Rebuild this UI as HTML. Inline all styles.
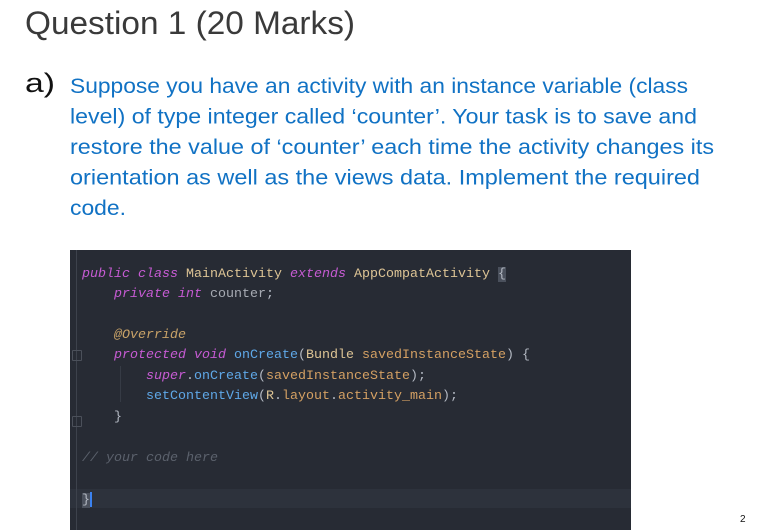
<!DOCTYPE html>
<html><head><meta charset="utf-8"><style>
html,body{margin:0;padding:0;background:#fff;width:759px;height:530px;overflow:hidden;position:relative}
svg{position:absolute;left:0;top:0}
.code{position:absolute;left:70px;top:250px;width:561px;height:280px;background:#272b34;overflow:hidden}
.gut{position:absolute;left:6px;top:0;width:1px;height:280px;background:#3d424c}
.hl{position:absolute;left:0;top:239px;width:561px;height:19px;background:#2d323c}
.l{position:absolute;left:12px;font-family:"Liberation Mono",monospace;font-size:13.33px;white-space:pre;color:#b3b8c2;line-height:16px}
.k{color:#c65bd3;font-style:italic}.c{color:#ddc495}.f{color:#5fa8e8}.p{color:#d4a063}.a{color:#c9a368;font-style:italic}.cm{color:#5b616c;font-style:italic}
.fold{position:absolute;left:2px;width:8px;height:9px;border:1px solid #4b505a;border-radius:1px}
</style></head><body>
<svg width="759" height="250" xmlns="http://www.w3.org/2000/svg">
<text x="25" y="34" font-family="Liberation Sans, sans-serif" font-size="32" fill="#3a3a3a" textLength="330" lengthAdjust="spacingAndGlyphs">Question 1 (20 Marks)</text>
<text x="25" y="92" font-family="Liberation Sans, sans-serif" font-size="27" fill="#111" textLength="30" lengthAdjust="spacingAndGlyphs">a)</text>
<g font-family="Liberation Sans, sans-serif" font-size="21" fill="#1172c4">
<text x="70" y="93" textLength="618" lengthAdjust="spacingAndGlyphs">Suppose you have an activity with an instance variable (class</text>
<text x="70" y="123.5" textLength="627" lengthAdjust="spacingAndGlyphs">level) of type integer called ‘counter’. Your task is to save and</text>
<text x="70" y="154" textLength="644" lengthAdjust="spacingAndGlyphs">restore the value of ‘counter’ each time the activity changes its</text>
<text x="70" y="184.5" textLength="630" lengthAdjust="spacingAndGlyphs">orientation as well as the views data. Implement the required</text>
<text x="70" y="215" textLength="56" lengthAdjust="spacingAndGlyphs">code.</text>
</g>
</svg>
<div class="code">
<div class="hl"></div>
<div class="gut"></div>
<div class="fold" style="top:100px"></div>
<div class="fold" style="top:166px"></div>
<div style="position:absolute;left:50px;top:116px;width:1px;height:36px;background:#363b45"></div>
<div class="l" style="top:17px"><span class="k">public class</span> <span class="c">MainActivity</span> <span class="k">extends</span> <span class="c">AppCompatActivity</span> <span style="background:#4a505c">{</span></div>
<div class="l" style="top:37px">    <span class="k">private int</span> <span style="color:#a7abb3">counter</span>;</div>
<div class="l" style="top:78px">    <span class="a">@Override</span></div>
<div class="l" style="top:98px">    <span class="k">protected void</span> <span class="f">onCreate</span>(<span class="c">Bundle</span> <span class="p">savedInstanceState</span>) {</div>
<div class="l" style="top:119px">        <span class="k">super</span>.<span class="f">onCreate</span>(<span class="p">savedInstanceState</span>);</div>
<div class="l" style="top:139px">        <span class="f">setContentView</span>(<span class="c">R</span>.<span class="p">layout</span>.<span class="p">activity_main</span>);</div>
<div class="l" style="top:160px">    }</div>
<div class="l" style="top:201px"><span class="cm">// your code here</span></div>
<div class="l" style="top:242px"><span style="background:#4a505c">}</span><span style="display:inline-block;width:2px;height:15px;background:#3b82f0;vertical-align:middle"></span></div>
</div>
<div style="position:absolute;left:740px;top:514px;font-family:'Liberation Sans',sans-serif;font-size:10px;color:#111">2</div>
</body></html>
